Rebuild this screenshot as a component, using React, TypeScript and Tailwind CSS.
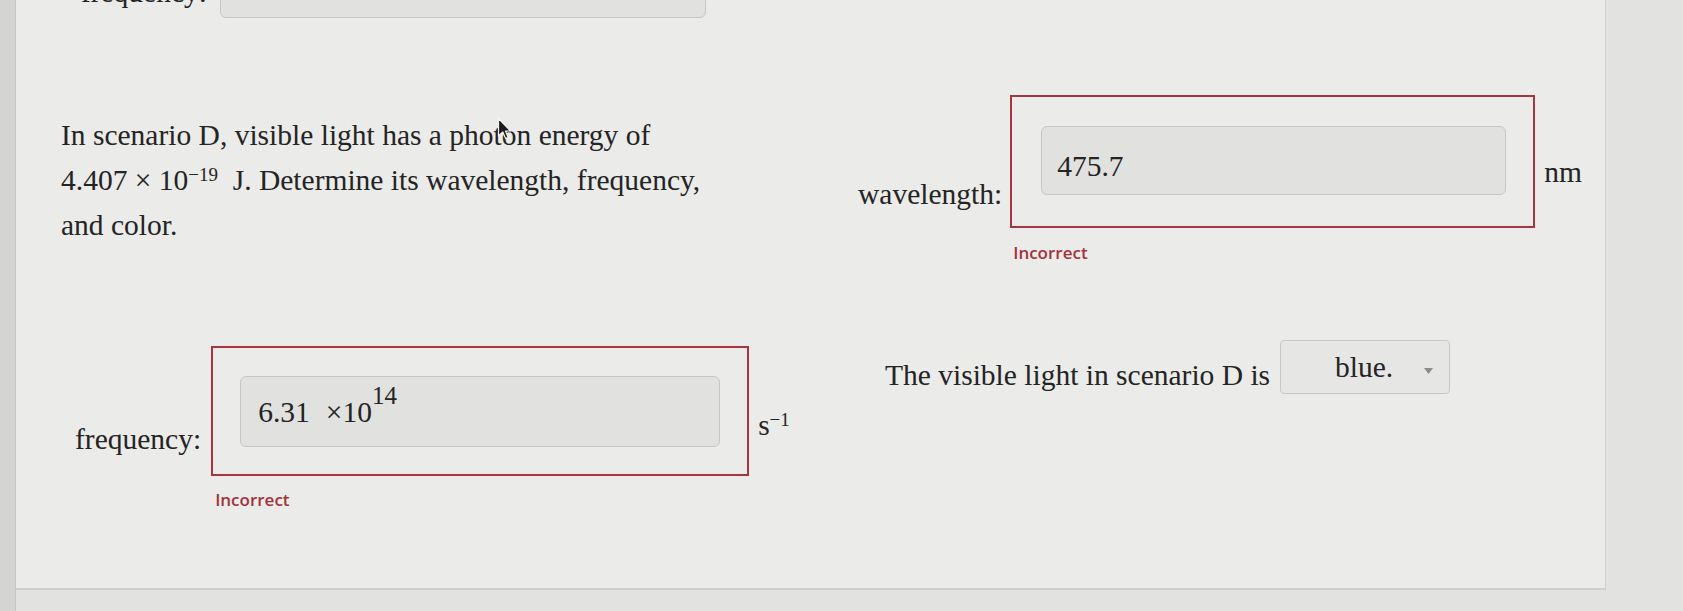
export default function App() {
  return (
    <div className="flex h-[611px] w-[1683px] overflow-hidden bg-[#e2e2e0] font-['Liberation_Serif',serif] text-[29.5px] text-[#242424]">
      {/* edge of the screen on the left */}
      <div className="w-[16px] shrink-0 border-r border-[#c6c6c4] bg-[#d4d4d2]" />

      <div className="relative h-[590px] w-[1590px] shrink-0 border-b-2 border-r border-[#cfcfcd] bg-[#ebebe9]">
        {/* previous question, cut off at the top */}
        <div className="flex h-[20px] items-end overflow-hidden">
          <div className="mb-[13px] w-[191px] text-right leading-[30px]">frequency:</div>
          <div className="mb-[2px] ml-[13px] h-[60px] w-[486px] shrink-0 rounded-[6px] border border-[#c6c6c4] bg-[#e1e1df]" />
        </div>

        {/* question text + wavelength */}
        <div className="mt-[75px] flex items-start">
          <div className="ml-[45px] mt-[18px] w-[797px] shrink-0 leading-[45px]">
            In scenario D, visible light has a photon energy of
            <br />
            4.407 × 10<sup className="text-[19px]">−19</sup>&nbsp; J. Determine its wavelength, frequency,
            <br />
            and color.
          </div>

          <div className="flex items-start">
            <div className="mt-[84px] leading-[30px]">wavelength:</div>
            <div className="ml-[8px] flex flex-col">
              <div className="h-[133px] w-[525px] border-2 border-[#a6353f] pl-[29px] pt-[29px]">
                <div className="h-[69px] w-[465px] rounded-[6px] border border-[#c6c6c4] bg-[#e1e1df] pl-[15px] pt-[24px] leading-[30px]">
                  475.7
                </div>
              </div>
              <div className="mt-[14px] pl-[3px] font-['Open_Sans',sans-serif] text-[17px] font-semibold leading-[22px] text-[#a3323c]">
                Incorrect
              </div>
            </div>
            <div className="ml-[9px] mt-[62px] leading-[30px]">nm</div>
          </div>
        </div>

        {/* frequency + colour */}
        <div className="mt-[76px] flex items-start">
          <div className="mt-[6px] flex w-[869px] shrink-0 items-start pl-[59px]">
            <div className="mt-[78px] leading-[30px]">frequency:</div>
            <div className="ml-[10px] flex flex-col">
              <div className="h-[130px] w-[538px] border-2 border-[#a6353f] pl-[27px] pt-[28px]">
                <div className="h-[71px] w-[480px] rounded-[6px] border border-[#c6c6c4] bg-[#e1e1df] pl-[17px] pt-[6px] leading-[30px]">
                  6.31<span className="ml-[16px]">×10</span>
                  <span className="align-[18px] text-[25px] leading-none">14</span>
                </div>
              </div>
              <div className="mt-[13px] pl-[4px] font-['Open_Sans',sans-serif] text-[17px] font-semibold leading-[22px] text-[#a3323c]">
                Incorrect
              </div>
            </div>
            <div className="ml-[9px] mt-[64px] leading-[30px]">
              s<sup className="text-[19px]">−1</sup>
            </div>
          </div>

          <div className="flex items-start">
            <div className="mt-[20px] leading-[30px]">The visible light in scenario D is</div>
            <div className="ml-[10px] flex h-[54px] w-[170px] items-center rounded-[4px] border border-[#c8c8c6] bg-[#e6e6e4] pl-[54px] leading-[30px]">
              <span>blue.</span>
              <svg className="ml-auto mr-[16px] mt-[8px]" width="9" height="6" viewBox="0 0 9 6">
                <path d="M0 0 L9 0 L4.5 6 Z" fill="#8c8c8c" />
              </svg>
            </div>
          </div>
        </div>

        {/* mouse pointer sitting on the text */}
        <svg className="absolute left-[481px] top-[117px]" width="15" height="24" viewBox="0 0 15 24">
          <path
            d="M1.5 1.5 L1.5 19 L5.8 15 L8.6 21.5 L11.2 20.4 L8.5 14 L13.5 14 Z"
            fill="#1c1c1c"
            stroke="#f4f4f2"
            strokeWidth="1.2"
            strokeLinejoin="round"
          />
        </svg>
      </div>
    </div>
  );
}
